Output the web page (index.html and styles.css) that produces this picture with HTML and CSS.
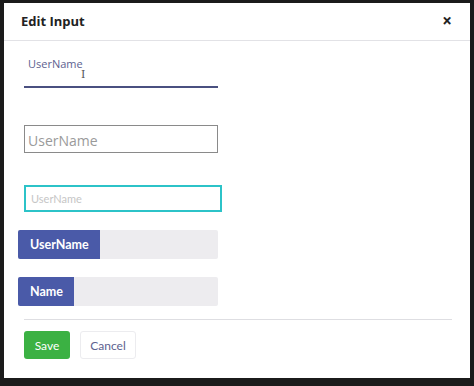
FILE: index.html
```html
<!DOCTYPE html>
<html lang="en">
<head>
  <meta charset="UTF-8">
  <title>Edit Input</title>
  <link rel="stylesheet" href="styles.css">
</head>
<body>
<div class="modal">
  <div class="modal-header">
    <h1 class="modal-title">Edit Input</h1>
    <span class="close">&times;</span>
  </div>
  <div class="modal-body">
    <div class="field-line">
      <label class="line-label">UserName</label>
      <span class="ibeam">I</span>
    </div>
    <input class="box-input" type="text" placeholder="UserName">
    <input class="focus-input" type="text" placeholder="UserName">
    <div class="group">
      <span class="group-label">UserName</span>
      <span class="group-fill"></span>
    </div>
    <div class="group group-last">
      <span class="group-label">Name</span>
      <span class="group-fill"></span>
    </div>
  </div>
  <div class="modal-footer">
    <button class="btn btn-save">Save</button>
    <button class="btn btn-cancel">Cancel</button>
  </div>
</div>
</body>
</html>
```

FILE: styles.css
```css
* {
  box-sizing: border-box;
  margin: 0;
  padding: 0;
}

body {
  background-color: #1b1b1b;
  padding: 3px 4px 8px 4px;
  font-family: 'Open Sans', sans-serif;
}

.modal {
  background-color: #fff;
  width: 466px;
  height: 375px;
  display: flex;
  flex-direction: column;
}

.modal-header {
  height: 38px;
  border-bottom: 1px solid #e2e2e6;
  display: flex;
  align-items: center;
  justify-content: space-between;
  padding: 0 18px 2px 17px;
}

.modal-title {
  font-size: 13px;
  font-weight: 700;
  color: #222;
}

.close {
  font-size: 17px;
  font-weight: 700;
  color: #222;
  line-height: 1;
}

.modal-body {
  padding: 16px 0 0 14px;
  display: flex;
  flex-direction: column;
}

.field-line {
  position: relative;
  width: 194px;
  margin-left: 6px;
  height: 31px;
  border-bottom: 2px solid #4a5080;
}

.line-label {
  display: block;
  font-size: 11px;
  color: #5d6290;
  padding: 0 0 0 4px;
  line-height: 14px;
}

.ibeam {
  position: absolute;
  left: 57px;
  top: 11px;
  font-family: 'DejaVu Serif', serif;
  font-size: 11px;
  color: #555;
}

.box-input {
  margin: 37px 0 0 6px;
  width: 194px;
  height: 28px;
  border: 1px solid #8a8a8a;
  padding: 2px 4px 0 3px;
  font-family: 'Open Sans', sans-serif;
  font-size: 14px;
  outline: none;
}

.box-input::placeholder {
  color: #9a9a9a;
}

.focus-input {
  margin: 32px 0 0 6px;
  width: 198px;
  height: 27px;
  border: 2px solid #2cc3c8;
  padding: 0 5px;
  font-family: 'Lato', sans-serif;
  font-size: 11px;
  outline: none;
}

.focus-input::placeholder {
  color: #c6c6c6;
}

.group {
  margin-top: 18px;
  width: 200px;
  height: 29px;
  display: flex;
  background-color: #edecef;
  border-radius: 2px;
}

.group-last {
  margin-top: 18px;
}

.group-label {
  background-color: #4a5aa8;
  color: #fff;
  font-family: 'Lato', sans-serif;
  font-weight: 700;
  font-size: 12.5px;
  display: flex;
  align-items: center;
  padding: 0 11px 0 12px;
  border-radius: 2px 0 0 2px;
}

.group-fill {
  flex: 1;
}

.modal-footer {
  margin: 13px 18px 0 20px;
  border-top: 1px solid #dedee2;
  padding: 11px 0 0 0;
  display: flex;
  gap: 10px;
}

.btn {
  height: 28px;
  font-family: 'Lato', sans-serif;
  font-size: 12px;
  border-radius: 3px;
  cursor: pointer;
}

.btn-save {
  width: 46px;
  background-color: #3bb143;
  color: #fff;
  border: none;
}

.btn-cancel {
  width: 56px;
  background-color: #fff;
  color: #5d6290;
  border: 1px solid #ececef;
}
```
